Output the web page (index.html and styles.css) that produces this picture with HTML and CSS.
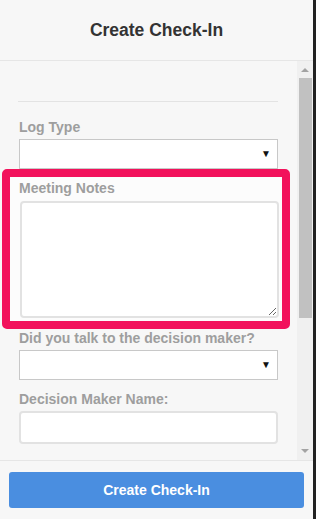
FILE: index.html
```html
<!DOCTYPE html>
<html lang="en">
<head>
    <meta charset="UTF-8">
    <title>Create Check-In</title>
    <link rel="stylesheet" href="styles.css">
</head>
<body>

<div class="panel">
    <div class="cabecera">
        <h1>Create Check-In</h1>
    </div>

    <div class="cuerpo">
        <div class="contenido">
            <hr class="separador">

            <div class="campo">
                <label>Log Type</label>
                <div class="selector">
                    <select><option></option></select>
                </div>
            </div>

            <div class="campo destacado">
                <span class="marco"></span>
                <label>Meeting Notes</label>
                <textarea></textarea>
            </div>

            <div class="campo">
                <label>Did you talk to the decision maker?</label>
                <div class="selector">
                    <select><option></option></select>
                </div>
            </div>

            <div class="campo">
                <label>Decision Maker Name:</label>
                <input type="text">
            </div>
        </div>

        <div class="barra">
            <span class="flecha arriba"></span>
            <span class="pulgar"></span>
            <span class="hueco"></span>
            <span class="flecha abajo"></span>
        </div>
    </div>

    <div class="pie">
        <button>Create Check-In</button>
    </div>
</div>

</body>
</html>
```

FILE: styles.css
```css
body {
    margin: 0;
    font-family: 'Liberation Sans', Arial, sans-serif;
    background-color: #222;
}
.panel {
    width: 313px;
    height: 519px;
    background-color: #f7f7f7;
    display: flex;
    flex-direction: column;
}
.cabecera {
    height: 60px;
    border-bottom: 1px solid #e6e6e6;
    display: flex;
    align-items: center;
    justify-content: center;
}
h1 {
    margin: 0;
    font-size: 17.5px;
    font-weight: bold;
    color: #333;
}
.cuerpo {
    height: 399px;
    display: flex;
    overflow: hidden;
}
.contenido {
    flex: 1;
    padding: 40px 19px 0 19px;
    overflow: hidden;
}
.separador {
    margin: 0 0 17px -1px;
    border: none;
    border-top: 1px solid #e3e3e3;
}
.campo {
    margin-bottom: 11px;
    position: relative;
    z-index: 0;
}
.campo label {
    display: block;
    font-size: 14px;
    line-height: 16px;
    font-weight: bold;
    color: #9e9e9e;
    margin-bottom: 4px;
}
.selector {
    position: relative;
}
.selector::after {
    content: "▼";
    position: absolute;
    right: 7px;
    top: 9px;
    font-size: 10px;
    color: #111;
    pointer-events: none;
}
select {
    appearance: none;
    width: 100%;
    height: 30px;
    border: 1px solid #c8c8c8;
    border-radius: 0;
    background: white;
    display: block;
}
textarea {
    display: block;
    width: 100%;
    height: 117px;
    box-sizing: border-box;
    border: 2px solid #e2e2e2;
    border-radius: 4px;
    background: white;
    margin-left: 1px;
}
input[type="text"] {
    display: block;
    width: 100%;
    height: 33px;
    box-sizing: border-box;
    border: 2px solid #e2e2e2;
    border-radius: 4px;
    background: white;
}
.destacado {
    margin-bottom: 12px;
}
.destacado label {
    margin-bottom: 5px;
}
.marco {
    position: absolute;
    left: -17px;
    top: -11px;
    right: -12px;
    bottom: -11px;
    border: 8px solid #f2125c;
    border-radius: 5px;
    background: #fcfcfc;
    z-index: -1;
}
.barra {
    width: 16px;
    background-color: #f0f0f0;
    display: flex;
    flex-direction: column;
    align-items: center;
}
.flecha {
    flex: none;
    width: 0;
    height: 0;
    border-left: 4px solid transparent;
    border-right: 4px solid transparent;
}
.arriba {
    margin: 7px 0 6px;
    border-bottom: 4px solid #a3a3a3;
}
.abajo {
    margin: 6px 0 7px;
    border-top: 4px solid #a3a3a3;
}
.pulgar {
    width: 13px;
    height: 240px;
    margin-left: 1px;
    background-color: #c1c1c1;
}
.hueco {
    flex: 1;
}
.pie {
    flex: 1;
    border-top: 1px solid #e6e6e6;
    padding: 11px 9px 0 9px;
}
button {
    width: 100%;
    height: 36px;
    background-color: #4a8ee0;
    color: white;
    border: none;
    border-radius: 3px;
    font-family: 'Liberation Sans', Arial, sans-serif;
    font-size: 14px;
    font-weight: bold;
}
```
